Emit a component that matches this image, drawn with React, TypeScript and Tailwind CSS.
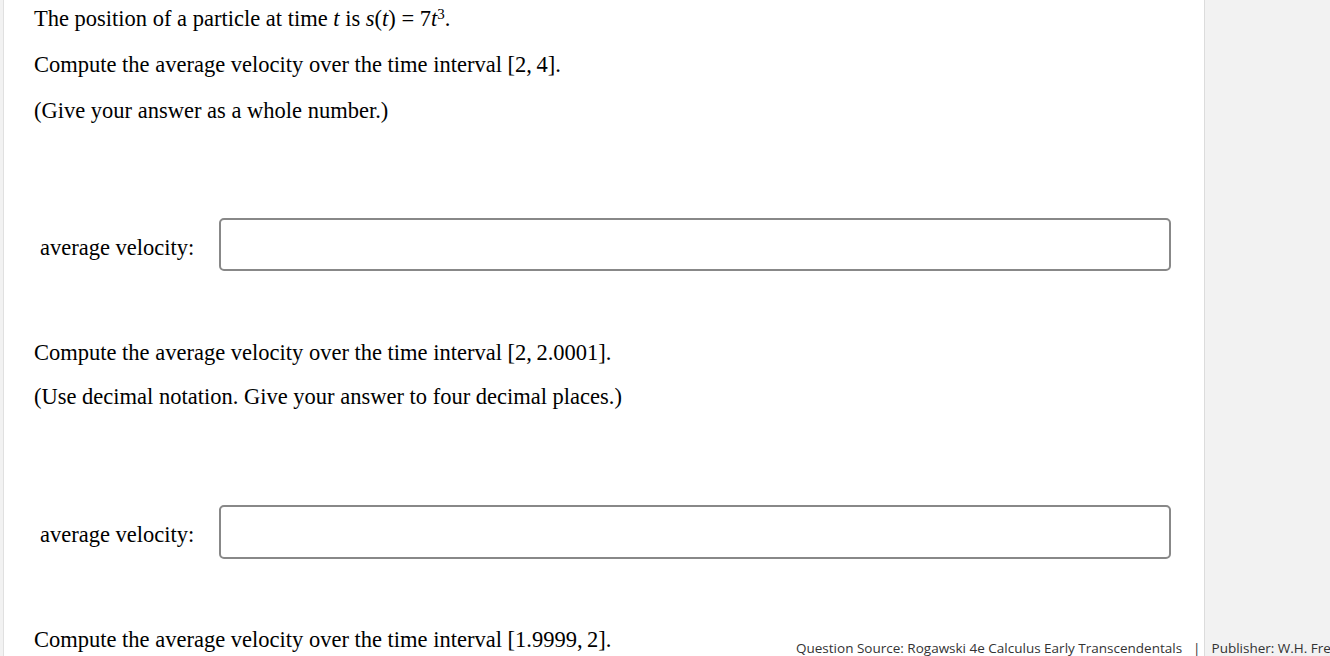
export default function App() {
  const serif = { fontFamily: '"Liberation Serif", "Times New Roman", serif' };
  return (
    <div className="relative flex h-[656px] w-[1330px] overflow-hidden bg-[#f2f2f2]">
      <div className="w-[4px] shrink-0 border-r border-[#e0e0e0]" />
      <main className="w-[1201px] shrink-0 border-r border-[#dcdcdc] bg-white pl-[30px] text-[22.5px] text-black" style={serif}>
        <p className="mt-[6px] leading-[26px]">
          The position of a particle at time <i>t</i> is <i>s</i>(<i>t</i>) = 7<i>t</i>
          <sup className="text-[15px]">3</sup>.
        </p>
        <p className="mt-[20px] leading-[26px]">Compute the average velocity over the time interval [2,&thinsp;4].</p>
        <p className="mt-[20px] leading-[26px]">(Give your answer as a whole number.)</p>

        <div className="mt-[94px] flex items-center">
          <label className="w-[185px] pl-[6px] pt-[6px] leading-[26px]">average velocity:</label>
          <input className="h-[53px] w-[952px] rounded-[5px] border-2 border-[#888] bg-white px-2 outline-none" />
        </div>

        <p className="mt-[69px] leading-[26px]">Compute the average velocity over the time interval [2,&thinsp;2.0001].</p>
        <p className="mt-[18px] leading-[26px]">(Use decimal notation. Give your answer to four decimal places.)</p>

        <div className="mt-[95px] flex items-center">
          <label className="w-[185px] pl-[6px] pt-[6px] leading-[26px]">average velocity:</label>
          <input className="h-[54px] w-[952px] rounded-[5px] border-2 border-[#888] bg-white px-2 outline-none" />
        </div>

        <p className="mt-[68px] leading-[26px]">Compute the average velocity over the time interval [1.9999,&thinsp;2].</p>
      </main>
      <div className="flex-1" />

      <footer
        className="absolute left-[796px] top-[638px] flex items-center whitespace-nowrap text-[13.5px] text-[#333]"
        style={{ fontFamily: '"Open Sans", sans-serif' }}
      >
        <span>Question Source: Rogawski 4e Calculus Early Transcendentals</span>
        <span className="px-[11px]">|</span>
        <span>Publisher: W.H. Freeman</span>
      </footer>
    </div>
  );
}
